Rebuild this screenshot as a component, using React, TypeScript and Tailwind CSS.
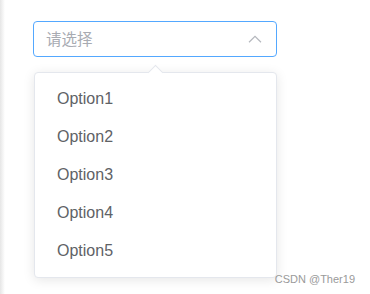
import React from "react";

const options = ["Option1", "Option2", "Option3", "Option4", "Option5"];

function ChevronUp() {
  return (
    <svg width="14" height="8" viewBox="0 0 14 8" fill="none">
      <path d="M1 7.2 L7 1.4 L13 7.2" stroke="#b4b7bd" strokeWidth="1.2" />
    </svg>
  );
}

export default function App() {
  return (
    <div
      className="relative flex h-[294px] w-[370px] overflow-hidden bg-white"
      style={{ fontFamily: '"Liberation Sans", "Noto Sans CJK SC", sans-serif' }}
    >
      <div className="h-full w-[5px] shrink-0 bg-gradient-to-r from-[#e6e6e6] to-white" />
      <div className="flex flex-col pl-[28px] pt-[21px]">
        <div className="flex h-[36px] w-[244px] items-center justify-between rounded-[4px] border border-[#54a8ff] pl-[12px] pr-[14px]">
          <span className="text-[15.5px] text-[#a8abb2]" style={{ fontFamily: '"Noto Sans CJK SC", sans-serif' }}>
            请选择
          </span>
          <ChevronUp />
        </div>
        <div className="relative mt-[15px] ml-[1px] w-[243px] rounded-[4px] border border-[#e4e7ed] bg-white py-[7px] shadow-[0_2px_12px_rgba(0,0,0,0.1)]">
          <div className="absolute -top-[6px] left-[115px] h-[11px] w-[11px] rotate-45 border-l border-t border-[#e4e7ed] bg-white" />
          {options.map((o) => (
            <div key={o} className="flex h-[38px] items-center pl-[22px] text-[16px] text-[#606266]">
              {o}
            </div>
          ))}
        </div>
      </div>
      <div className="absolute bottom-[7px] right-[15px] text-[11px] text-[#9a9a9a]">CSDN @Ther19</div>
    </div>
  );
}
